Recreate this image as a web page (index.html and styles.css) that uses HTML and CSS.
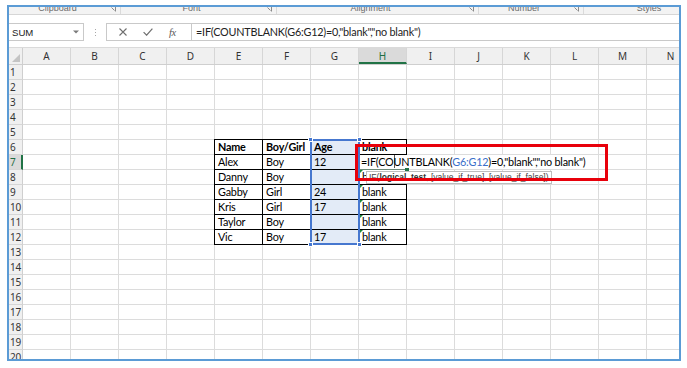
FILE: index.html
```html
<!DOCTYPE html>
<html>
<head>
<meta charset="utf-8">
<link rel="stylesheet" href="styles.css">
</head>
<body>
<div class="frame">
  <div class="ribbon">
    <div class="grp w1"><span class="lbl">Clipboard</span><span class="launch"><svg width="6" height="6" viewBox="0 0 6 6"><path d="M0.5 0.5H5.5V5.5" fill="none" stroke="#8a8a8a" stroke-width="1"/><path d="M1.5 1.5L4.5 4.5" stroke="#8a8a8a" stroke-width="1"/></svg></span></div>
    <div class="grp w2"><span class="lbl">Font</span><span class="launch"><svg width="6" height="6" viewBox="0 0 6 6"><path d="M0.5 0.5H5.5V5.5" fill="none" stroke="#8a8a8a" stroke-width="1"/><path d="M1.5 1.5L4.5 4.5" stroke="#8a8a8a" stroke-width="1"/></svg></span></div>
    <div class="grp w3"><span class="lbl">Alignment</span><span class="launch"><svg width="6" height="6" viewBox="0 0 6 6"><path d="M0.5 0.5H5.5V5.5" fill="none" stroke="#8a8a8a" stroke-width="1"/><path d="M1.5 1.5L4.5 4.5" stroke="#8a8a8a" stroke-width="1"/></svg></span></div>
    <div class="grp w4"><span class="lbl">Number</span><span class="launch"><svg width="6" height="6" viewBox="0 0 6 6"><path d="M0.5 0.5H5.5V5.5" fill="none" stroke="#8a8a8a" stroke-width="1"/><path d="M1.5 1.5L4.5 4.5" stroke="#8a8a8a" stroke-width="1"/></svg></span></div>
    <div class="grp w5"><span class="lbl">Styles</span></div>
  </div>

  <div class="fbar">
    <div class="namebox">
      <span class="nm">SUM</span>
      <svg class="dd" width="6" height="4" viewBox="0 0 6 4"><path d="M0 0.5H6L3 3.5Z" fill="#7a7a7a"/></svg>
    </div>
    <div class="grip"><i></i><i></i><i></i></div>
    <div class="fbox">
      <div class="btns">
        <svg class="bx" width="8" height="8" viewBox="0 0 8 8"><path d="M0.5 0.5L7.5 7.5M7.5 0.5L0.5 7.5" stroke="#6f6f6f" stroke-width="1.1" fill="none"/></svg>
        <svg class="bc" width="10" height="8" viewBox="0 0 10 8"><path d="M0.6 4.2L3.6 7.2L9.4 0.6" stroke="#6f6f6f" stroke-width="1.2" fill="none"/></svg>
        <span class="fx">fx</span>
      </div>
      <div class="finput">=IF(COUNTBLANK(G6:G12)=0,"blank","no blank")</div>
    </div>
  </div>

  <div class="colhdr">
    <div class="corner"><svg width="8" height="8" viewBox="0 0 8 8"><path d="M8 0V8H0Z" fill="#c4c4c4"/></svg></div>
    <div class="ch">A</div>
    <div class="ch">B</div>
    <div class="ch">C</div>
    <div class="ch">D</div>
    <div class="ch">E</div>
    <div class="ch">F</div>
    <div class="ch">G</div>
    <div class="ch act">H</div>
    <div class="ch">I</div>
    <div class="ch">J</div>
    <div class="ch">K</div>
    <div class="ch">L</div>
    <div class="ch">M</div>
    <div class="ch">N</div>
  </div>

  <div class="sheet">
    <div class="rowhdr">
      <div class="rn">1</div>
      <div class="rn">2</div>
      <div class="rn">3</div>
      <div class="rn">4</div>
      <div class="rn">5</div>
      <div class="rn">6</div>
      <div class="rn act">7</div>
      <div class="rn">8</div>
      <div class="rn">9</div>
      <div class="rn">10</div>
      <div class="rn">11</div>
      <div class="rn">12</div>
      <div class="rn">13</div>
      <div class="rn">14</div>
      <div class="rn">15</div>
      <div class="rn">16</div>
      <div class="rn">17</div>
      <div class="rn">18</div>
      <div class="rn">19</div>
      <div class="rn">20</div>
    </div>
    <div class="cells">
      <div class="tbl">
        <div class="c hd">Name</div><div class="c hd">Boy/Girl</div><div class="c hd g">Age</div><div class="c hd">blank</div>
        <div class="c">Alex</div><div class="c">Boy</div><div class="c g">12</div><div class="c edit"><span class="etext">=IF(CO<i class="caret"></i>UNTBLANK(<span class="ref">G6:G12</span>)=0,"blank","no blank")</span></div>
        <div class="c">Danny</div><div class="c">Boy</div><div class="c g"></div><div class="c tri">blank<div class="tip">IF(<b>logical_test</b>, [value_if_true], [value_if_false])</div></div>
        <div class="c">Gabby</div><div class="c">Girl</div><div class="c g">24</div><div class="c tri">blank</div>
        <div class="c">Kris</div><div class="c">Girl</div><div class="c g">17</div><div class="c tri">blank</div>
        <div class="c">Taylor</div><div class="c">Boy</div><div class="c g"></div><div class="c tri">blank</div>
        <div class="c">Vic</div><div class="c">Boy</div><div class="c g">17</div><div class="c tri">blank</div>
      </div>
      <div class="sel"><i class="hd1 tl"></i><i class="hd1 tr"></i><i class="hd1 bl"></i><i class="hd1 br"></i></div>
    </div>
  </div>

  <div class="redbox"></div>
</div>
</body>
</html>
```

FILE: styles.css
```css
* { box-sizing: border-box; }
html, body { margin: 0; padding: 0; background: #ffffff; }

.frame {
  position: relative;
  width: 674px;
  height: 356px;
  margin: 5px 0 0 7px;
  border: 2px solid #5b9bd5;
  overflow: hidden;
  background: #ffffff;
}

/* ribbon strip */
.ribbon {
  display: flex;
  height: 8px;
  background: #f3f3f3;
  border-bottom: 1px solid #d6d6d6;
  overflow: hidden;
}
.grp {
  display: flex;
  flex-shrink: 0;
  height: 7px;
  border-right: 1px solid #dadada;
}
.w1 { width: 112px; }
.w2 { width: 156px; }
.w3 { width: 202px; }
.w4 { width: 105px; }
.w5 { width: 130px; border-right: none; }
.lbl {
  flex: 1;
  display: block;
  text-align: center;
  font-family: "Liberation Sans", Arial, sans-serif;
  font-size: 9px;
  line-height: 10px;
  margin-top: -4px;
  color: #6b6b6b;
}
.launch {
  width: 14px;
  display: flex;
  justify-content: center;
  margin-top: -1px;
}
.launch svg { display: block; }

/* formula bar */
.fbar {
  display: flex;
  align-items: flex-start;
  height: 32px;
  padding-top: 8px;
  background: #ffffff;
}
.namebox {
  flex-shrink: 0;
  width: 75px;
  height: 18px;
  border: 1px solid #c9c9c9;
  border-left: none;
  display: flex;
  align-items: center;
  justify-content: space-between;
  padding: 0 4px 0 3px;
  background: #fff;
}
.nm {
  font-family: "Liberation Sans", Arial, sans-serif;
  font-size: 9.6px;
  color: #222;
}
.dd { display: block; }
.grip {
  flex-shrink: 0;
  width: 22px;
  height: 18px;
  display: flex;
  flex-direction: column;
  align-items: center;
  justify-content: center;
  gap: 2px;
}
.grip i {
  display: block;
  width: 1px;
  height: 1px;
  background: #a8a8a8;
}
.fbox {
  flex: 1;
  height: 18px;
  display: flex;
  border: 1px solid #c9c9c9;
  border-right: none;
  background: #fff;
}
.btns {
  flex-shrink: 0;
  width: 85px;
  display: flex;
  align-items: center;
  padding-left: 12px;
  border-right: 1px solid #c9c9c9;
}
.bx { display: block; }
.bc { display: block; margin-left: 16px; }
.fx {
  margin-left: 16px;
  font-family: "Liberation Serif", "Times New Roman", serif;
  font-style: italic;
  font-size: 10.5px;
  color: #5a5a5a;
  letter-spacing: -0.5px;
}
.finput {
  padding-left: 4px;
  font-family: Lato, "Liberation Sans", sans-serif;
  font-size: 10.8px;
  letter-spacing: -0.2px;
  line-height: 16px;
  color: #222;
  white-space: nowrap;
}

/* column headers */
.colhdr {
  display: flex;
  height: 18px;
  background: #f0f0f0;
  border-top: 1px solid #dadada;
  border-bottom: 1px solid #cfcfcf;
}
.corner {
  flex-shrink: 0;
  width: 14px;
  border-right: 1px solid #cfcfcf;
  display: flex;
  align-items: flex-end;
  justify-content: flex-end;
  padding: 0 2px 2px 0;
}
.corner svg { display: block; }
.ch {
  flex-shrink: 0;
  width: 48px;
  border-right: 1px solid #d6d6d6;
  text-align: center;
  font-family: "Noto Sans", "Liberation Sans", sans-serif;
  font-size: 10px;
  line-height: 16px;
  color: #333;
}
.ch.act {
  background: #dadada;
  border-bottom: 2px solid #217346;
  color: #1f6e43;
}

/* sheet body */
.sheet {
  display: flex;
}
.rowhdr {
  flex-shrink: 0;
  width: 14px;
  background: #f0f0f0;
}
.rn {
  height: 15px;
  border-right: 1px solid #cfcfcf;
  border-bottom: 1px solid #d6d6d6;
  padding-left: 1px;
  font-family: "Noto Sans", "Liberation Sans", sans-serif;
  font-size: 10px;
  letter-spacing: -0.3px;
  line-height: 14px;
  color: #333;
  white-space: nowrap;
}
.rn.act {
  background: #dadada;
  border-right: 2px solid #217346;
  color: #1f6e43;
}

.cells {
  flex-shrink: 0;
  display: grid;
  grid-template-columns: repeat(14, 48px);
  grid-template-rows: repeat(20, 15px);
  background-image:
    linear-gradient(to right, transparent 47px, #dcdcdc 47px),
    linear-gradient(to bottom, transparent 14px, #dcdcdc 14px);
  background-size: 48px 15px;
}

.tbl {
  grid-column: 5 / span 4;
  grid-row: 6 / span 7;
  margin: -1px 0 0 -1px;
  border-left: 1px solid #000;
  border-top: 1px solid #000;
  display: grid;
  grid-template-columns: repeat(4, 48px);
  grid-template-rows: repeat(7, 15px);
}
.c {
  position: relative;
  border-right: 1px solid #000;
  border-bottom: 1px solid #000;
  padding-left: 3px;
  background: #fff;
  font-family: Lato, "Liberation Sans", sans-serif;
  font-size: 10.8px;
  letter-spacing: -0.2px;
  line-height: 14px;
  color: #000;
  white-space: nowrap;
}
.c.hd { font-weight: bold; }
.c.g { background: #e3ebf7; }

.c.edit {
  padding-left: 1px;
  z-index: 1;
  border: 1px solid #6d8a78;
  border-top: none;
}
.etext {
  position: relative;
  display: inline-block;
  background: #fff;
  padding-right: 2px;
}
.ref { color: #3a6fc9; }
.caret {
  display: inline-block;
  width: 1px;
  height: 13px;
  margin: 0 -1px -2px 0;
  background: #555;
}
.c.edit::after {
  content: "";
  position: absolute;
  right: -3px;
  bottom: -3px;
  width: 4px;
  height: 4px;
  background: #217346;
}

.c.tri::before {
  content: "";
  position: absolute;
  left: 0;
  top: 0;
  border-top: 4px solid #1e8b3f;
  border-right: 4px solid transparent;
}

.tip {
  position: absolute;
  left: 7px;
  top: 1px;
  height: 13px;
  padding: 0 2px;
  background: #fff;
  border: 1px solid #bdbdbd;
  font-family: "Liberation Sans", Arial, sans-serif;
  font-size: 8.5px;
  letter-spacing: 0;
  line-height: 11px;
  color: #444;
  white-space: nowrap;
  z-index: 3;
}
.tip b { font-weight: bold; color: #333; }

.sel {
  grid-column: 7;
  grid-row: 6 / span 7;
  margin: -1px -1px 0 -1px;
  border: 2px solid #4677cf;
  position: relative;
  z-index: 2;
}
.hd1 {
  position: absolute;
  width: 5px;
  height: 5px;
  background: #4677cf;
  border: 1px solid #fff;
}
.tl { left: -4px; top: -4px; }
.tr { right: -4px; top: -4px; }
.bl { left: -4px; bottom: -4px; }
.br { right: -4px; bottom: -4px; }

.redbox {
  position: absolute;
  left: 346px;
  top: 137px;
  width: 253px;
  height: 37px;
  border: 3px solid #e8000b;
  z-index: 5;
}
```
